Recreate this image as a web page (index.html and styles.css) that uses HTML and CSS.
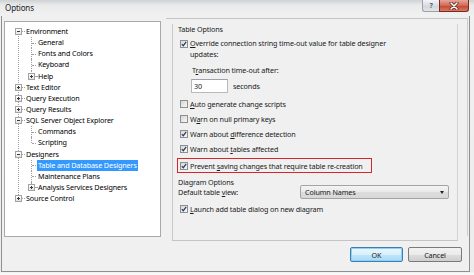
FILE: index.html
```html
<!DOCTYPE html>
<html>
<head>
<meta charset="utf-8">
<title>Options</title>
<link rel="stylesheet" href="styles.css">
</head>
<body>
<div class="window">
  <div class="titlebar">
    <span class="title">Options</span>
    <div class="caption-btns">
      <span class="cbtn help">?</span>
      <span class="cbtn close"><svg width="10" height="8" viewBox="0 0 10 8"><path d="M2 1 L8 7 M8 1 L2 7" stroke="#5a1a14" stroke-width="3" stroke-linecap="round"/><path d="M2 1 L8 7 M8 1 L2 7" stroke="#fff" stroke-width="1.6" stroke-linecap="round"/></svg></span>
    </div>
  </div>
  <div class="client">
    <div class="main">
      <div class="tree">
        <div class="row l0"><span class="exp minus"></span><span class="tick"></span><span class="lbl">Environment</span></div>
        <div class="row l1"><span class="lbl">General</span></div>
        <div class="row l1"><span class="lbl">Fonts and Colors</span></div>
        <div class="row l1"><span class="lbl">Keyboard</span></div>
        <div class="row l1 box last"><span class="exp plus"></span><span class="tick t2"></span><span class="lbl">Help</span></div>
        <div class="row l0"><span class="exp plus"></span><span class="tick"></span><span class="lbl">Text Editor</span></div>
        <div class="row l0"><span class="exp plus"></span><span class="tick"></span><span class="lbl">Query Execution</span></div>
        <div class="row l0"><span class="exp plus"></span><span class="tick"></span><span class="lbl">Query Results</span></div>
        <div class="row l0"><span class="exp minus"></span><span class="tick"></span><span class="lbl">SQL Server Object Explorer</span></div>
        <div class="row l1"><span class="lbl">Commands</span></div>
        <div class="row l1 last"><span class="lbl">Scripting</span></div>
        <div class="row l0"><span class="exp minus"></span><span class="tick"></span><span class="lbl">Designers</span></div>
        <div class="row l1"><span class="lbl sel">Table and Database Designers</span></div>
        <div class="row l1"><span class="lbl">Maintenance Plans</span></div>
        <div class="row l1 box last"><span class="exp plus"></span><span class="tick t2"></span><span class="lbl">Analysis Services Designers</span></div>
        <div class="row l0"><span class="exp plus"></span><span class="tick"></span><span class="lbl">Source Control</span></div>
      </div>
      <div class="right">
        <div class="page">
          <div class="gtitle">Table Options</div>
          <div class="opt multi"><span class="cb on"><svg width="6" height="6" viewBox="0 0 6 6"><path d="M0.8 3.1 L2.3 4.7 L5.2 0.9" fill="none" stroke="#2b3b63" stroke-width="1.2"/></svg></span><span class="txt"><u>O</u>verride connection string time-out value for table designer<br>updates:</span></div>
          <div class="sub">T<u>r</u>ansaction time-out after:</div>
          <div class="tbrow"><span class="tbox">30</span><span class="unit">seconds</span></div>
          <div class="opt first"><span class="cb"></span><span class="txt"><u>A</u>uto generate change scripts</span></div>
          <div class="opt"><span class="cb"></span><span class="txt">W<u>a</u>rn on null primary keys</span></div>
          <div class="opt"><span class="cb on"><svg width="6" height="6" viewBox="0 0 6 6"><path d="M0.8 3.1 L2.3 4.7 L5.2 0.9" fill="none" stroke="#2b3b63" stroke-width="1.2"/></svg></span><span class="txt">Warn about <u>d</u>ifference detection</span></div>
          <div class="opt"><span class="cb on"><svg width="6" height="6" viewBox="0 0 6 6"><path d="M0.8 3.1 L2.3 4.7 L5.2 0.9" fill="none" stroke="#2b3b63" stroke-width="1.2"/></svg></span><span class="txt">Warn about <u>t</u>ables affected</span></div>
          <div class="opt hl"><span class="cb on"><svg width="6" height="6" viewBox="0 0 6 6"><path d="M0.8 3.1 L2.3 4.7 L5.2 0.9" fill="none" stroke="#2b3b63" stroke-width="1.2"/></svg></span><span class="txt">Prevent <u>s</u>aving changes that require table re-creation</span></div>
          <div class="gtitle g2">Diagram Options</div>
          <div class="viewrow"><span class="vlabel">Default table <u>v</u>iew:</span><span class="combo"><span>Column Names</span><span class="arrow"></span></span></div>
          <div class="opt launch"><span class="cb on"><svg width="6" height="6" viewBox="0 0 6 6"><path d="M0.8 3.1 L2.3 4.7 L5.2 0.9" fill="none" stroke="#2b3b63" stroke-width="1.2"/></svg></span><span class="txt"><u>L</u>aunch add table dialog on new diagram</span></div>
        </div>
      </div>
    </div>
    <div class="buttons">
      <span class="btn default">OK</span>
      <span class="btn">Cancel</span>
    </div>
  </div>
</div>
</body>
</html>
```
FILE: styles.css
```css
html, body {
  margin: 0;
  padding: 0;
}
body {
  width: 474px;
  height: 275px;
  overflow: hidden;
  background: #f7f7f7;
  font-family: "Noto Sans", "Open Sans", sans-serif;
  font-size: 7.2px;
  letter-spacing: -0.12px;
  color: #111;
}
.window {
  width: 474px;
  height: 275px;
  background: linear-gradient(to bottom, #cfd1d3 0, #e9eaeb 5px, #f1f1f1 16px, #ececec 272px, #f8f8f8 273px);
}
.titlebar {
  height: 16px;
  display: flex;
  justify-content: space-between;
  align-items: flex-start;
}
.title {
  padding-left: 5px;
  padding-top: 3px;
  font-size: 8px;
  line-height: 10px;
  color: #1a1a1a;
}
.caption-btns {
  display: flex;
  margin-right: 5px;
}
.cbtn {
  height: 12px;
  box-sizing: border-box;
  display: flex;
  align-items: center;
  justify-content: center;
}
.help {
  width: 17px;
  border: 1px solid #9aa3ab;
  border-top: none;
  border-right: none;
  border-radius: 0 0 0 3px;
  background: linear-gradient(to bottom, #f3f5f7, #d9dde1 50%, #cfd4d9 51%, #e2e6ea);
  color: #505a64;
  font-size: 7px;
  font-weight: bold;
}
.close {
  width: 30px;
  border: 1px solid #7a2a20;
  border-top: none;
  border-radius: 0 0 3px 0;
  background: linear-gradient(to bottom, #e6a597, #cf6a58 50%, #c0442f 51%, #d97a62);
}
.client {
  margin-left: 1px;
  width: 469px;
  height: 256px;
  box-sizing: border-box;
  border: 1px solid #8f8f8f;
  border-top: none;
  background: #f0f0f0;
}
.main {
  height: 221px;
  display: flex;
  align-items: flex-start;
}
.tree {
  position: relative;
  margin-top: 5px;
  margin-left: 2px;
  width: 157px;
  height: 216px;
  box-sizing: border-box;
  border: 1px solid #a9a9a9;
  background: #fff;
  padding-top: 4px;
}
.tree::before {
  content: "";
  position: absolute;
  left: 13px;
  top: 10px;
  height: 167px;
  border-left: 1px dotted #a0a0a0;
}
.row {
  position: relative;
  height: 11.15px;
  line-height: 11.15px;
  display: flex;
  align-items: center;
  white-space: nowrap;
  color: #000;
}
.l0 {
  padding-left: 10px;
}
.l1 {
  padding-left: 33px;
}
.l1.box {
  padding-left: 23px;
}
.l1::before {
  content: "";
  position: absolute;
  left: 26px;
  top: 0;
  bottom: 0;
  border-left: 1px dotted #a0a0a0;
}
.l1.last::before {
  bottom: 50%;
}
.l1:not(.box)::after {
  content: "";
  position: absolute;
  left: 27px;
  width: 4px;
  top: 50%;
  border-top: 1px dotted #a0a0a0;
}
.exp {
  position: relative;
  z-index: 1;
  flex: none;
  width: 7px;
  height: 7px;
  box-sizing: border-box;
  border: 1px solid #a3a3a3;
  background: linear-gradient(to bottom, #ffffff, #e4e4e4);
}
.exp::before {
  content: "";
  position: absolute;
  left: 1px;
  top: 2px;
  width: 3px;
  height: 1px;
  background: #3a3a3a;
}
.plus::after {
  content: "";
  position: absolute;
  left: 2px;
  top: 1px;
  width: 1px;
  height: 3px;
  background: #3a3a3a;
}
.tick {
  flex: none;
  width: 3px;
  border-top: 1px dotted #a0a0a0;
  margin-right: 1px;
}
.tick.t2 {
  width: 2px;
}
.lbl.sel {
  background: #3399ff;
  color: #fff;
  padding: 0 1px;
  margin-left: -1px;
  line-height: 11px;
}
.right {
  margin-top: 2px;
  margin-left: 5px;
  width: 302px;
  height: 218px;
  box-sizing: border-box;
  border-top: 1px solid #c4c4c4;
  border-right: 1px solid #cdcdcd;
}
.page {
  margin-left: 6px;
  width: 286px;
  height: 217px;
  box-sizing: border-box;
  border-left: 1px solid #c8c8c8;
  border-right: 1px solid #d2d2d2;
  border-bottom: 1px solid #c4c4c4;
  color: #1a1a1a;
}
.gtitle {
  margin-top: 5px;
  padding-left: 5px;
  line-height: 11px;
  height: 11px;
}
.gtitle.g2 {
  margin-top: 5px;
  line-height: 8px;
  height: 8px;
}
.opt {
  display: flex;
  align-items: center;
  height: 15px;
  padding-left: 7px;
  white-space: nowrap;
}
.opt .txt {
  margin-left: 2px;
}
.opt.multi {
  margin-top: 3px;
  height: 22px;
  align-items: flex-start;
  line-height: 11px;
}
.opt.multi .cb {
  margin-top: 2px;
}
.opt.first {
  margin-top: 3.5px;
}
.opt.hl {
  margin-top: 1.5px;
  margin-left: 4px;
  width: 195px;
  box-sizing: border-box;
  border: 1px solid #d8242c;
  padding-left: 2px;
}
.opt.launch {
  margin-top: 2.5px;
}
.cb {
  flex: none;
  width: 8px;
  height: 8px;
  box-sizing: border-box;
  border: 1px solid #8e8f8f;
  background: linear-gradient(135deg, #d6d6d6, #f8f8f8);
  display: flex;
  align-items: center;
  justify-content: center;
}
.sub {
  margin-top: 5px;
  padding-left: 19px;
  line-height: 11px;
  height: 11px;
}
.tbrow {
  margin-top: 3px;
  height: 14px;
  display: flex;
  align-items: center;
}
.tbox {
  margin-left: 18px;
  width: 37px;
  height: 14px;
  box-sizing: border-box;
  border: 1px solid #b5b9c0;
  border-top-color: #9da2aa;
  background: #fff;
  padding-left: 2px;
  line-height: 12px;
}
.unit {
  margin-left: 5px;
}
.viewrow {
  margin-top: -1px;
  height: 14px;
  display: flex;
  align-items: center;
  justify-content: space-between;
  padding-left: 5px;
  padding-right: 8px;
}
.combo {
  width: 149px;
  height: 14px;
  box-sizing: border-box;
  border: 1px solid #a4a4a4;
  border-radius: 2px;
  background: linear-gradient(to bottom, #f4f4f4, #e9e9e9 50%, #dcdcdc 51%, #d8d8d8);
  display: flex;
  align-items: center;
  justify-content: space-between;
  padding-left: 4px;
  padding-right: 4px;
  line-height: 12px;
}
.arrow {
  width: 0;
  height: 0;
  border-left: 2.5px solid transparent;
  border-right: 2.5px solid transparent;
  border-top: 3px solid #222;
}
.buttons {
  margin-top: 10px;
  display: flex;
  justify-content: flex-end;
  gap: 5px;
  padding-right: 7px;
}
.btn {
  width: 53px;
  height: 15px;
  box-sizing: border-box;
  border: 1px solid #7a7a7a;
  border-radius: 2px;
  background: linear-gradient(to bottom, #f2f2f2, #ebebeb 50%, #dddddd 51%, #cfcfcf);
  display: flex;
  align-items: center;
  justify-content: center;
  color: #1a1a1a;
}
.btn + .btn {
  width: 54px;
}
.btn.default {
  border-color: #3c7fb1;
  box-shadow: inset 0 0 0 1px #8fd0f0;
  background: linear-gradient(to bottom, #eaf6fd, #d9f0fc 50%, #bee6fd 51%, #a7d9f5);
}
```
